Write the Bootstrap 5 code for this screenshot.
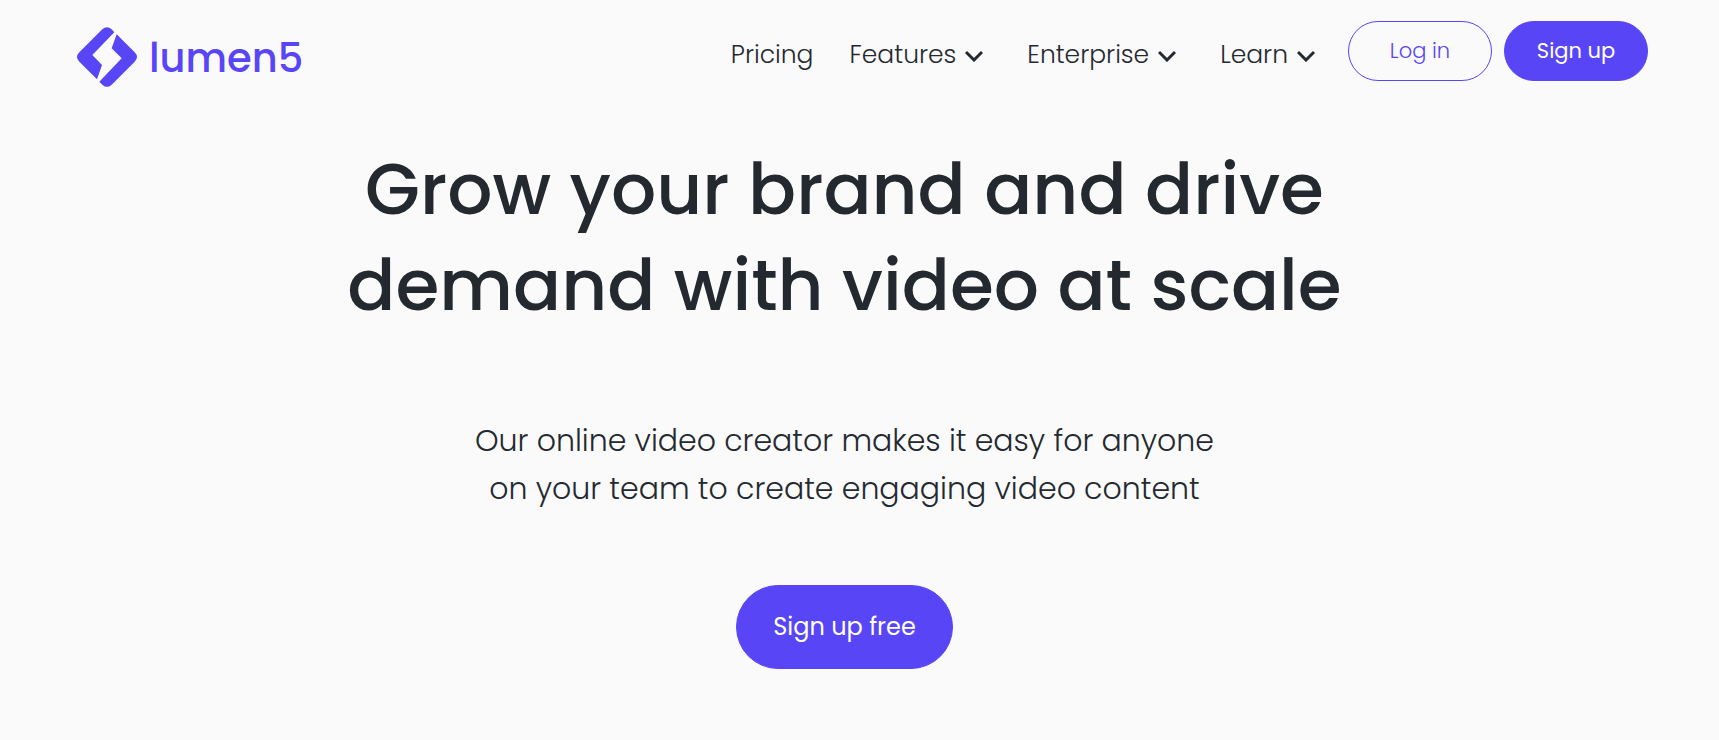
<!DOCTYPE html>
<html lang="en">
<head>
<meta charset="utf-8">
<meta name="viewport" content="width=device-width, initial-scale=1">
<title>Lumen5</title>
<link href="https://cdn.jsdelivr.net/npm/bootstrap@5.3.0/dist/css/bootstrap.min.css" rel="stylesheet">
<style>
  :root { --brand: #5846f6; --ink: #242930; }
  body { background: #fafafa; color: var(--ink); font-family: Poppins, Inter, sans-serif; }
  .site-header { padding: 21px 71px 0 77px; }
  .site-logo { color: var(--brand); font-size: 40px; line-height: 60px; font-weight: 500; gap: 12px; padding-top: 5px; }
  .site-logo:hover { color: var(--brand); }
  .site-logo span { padding-top: 2px; }
  .site-menu { gap: 36px; padding: 16px 25px 0 0; }
  .site-menu .nav-link { color: var(--ink); font-size: 25px; line-height: 36px; font-weight: 300; padding: 0; }
  .chevron { margin: 2px 8px 0 9px; }
  .site-actions { gap: 12px; }
  .pill { border-radius: 50rem; --bs-btn-color: var(--brand); --bs-btn-border-color: var(--brand); --bs-btn-hover-color: #fff; --bs-btn-hover-bg: var(--brand); --bs-btn-hover-border-color: var(--brand); }
  .pill-solid { --bs-btn-color: #fff; --bs-btn-bg: var(--brand); }
  .pill-header { width: 144px; height: 60px; font-size: 21px; padding: 0; }
  .pill-hero { width: 217px; height: 84px; font-size: 24px; padding: 0; }
  .hero { padding: 53px 30px 71px 0; }
  .hero-title { font-size: 71px; line-height: 96px; font-weight: 500; margin-bottom: 84px; }
  .hero-text { font-size: 30px; line-height: 48px; font-weight: 300; margin-bottom: 72px; }
</style>
</head>
<body>
<header class="site-header d-flex align-items-start justify-content-between">
  <a class="site-logo d-flex align-items-center text-decoration-none" href="#">
    <svg width="60" height="60" viewBox="0 0 180 180" fill="currentColor" aria-hidden="true">
      <path d="M112 16 46 84 75 114 60 157 7 104Q-7 90 7 76L76 7Q90-6 104 7Z"/>
      <path d="M119 22 173 76Q187 90 173 104L104 173Q90 186 76 173L67 164 134 94 104 64Z"/>
    </svg>
    <span>lumen5</span>
  </a>
  <div class="d-flex align-items-start">
    <nav aria-label="Main">
      <ul class="site-menu nav flex-nowrap">
        <li class="nav-item"><a class="nav-link" href="#">Pricing</a></li>
        <li class="nav-item"><a class="nav-link d-flex align-items-center" href="#">Features<svg class="chevron" width="18" height="12" viewBox="0 0 18 12" fill="none" stroke="currentColor" stroke-width="3" aria-hidden="true"><path d="M1 2l8 8 8-8"/></svg></a></li>
        <li class="nav-item"><a class="nav-link d-flex align-items-center" href="#">Enterprise<svg class="chevron" width="18" height="12" viewBox="0 0 18 12" fill="none" stroke="currentColor" stroke-width="3" aria-hidden="true"><path d="M1 2l8 8 8-8"/></svg></a></li>
        <li class="nav-item"><a class="nav-link d-flex align-items-center" href="#">Learn<svg class="chevron" width="18" height="12" viewBox="0 0 18 12" fill="none" stroke="currentColor" stroke-width="3" aria-hidden="true"><path d="M1 2l8 8 8-8"/></svg></a></li>
      </ul>
    </nav>
    <div class="site-actions d-flex">
      <button type="button" class="btn pill pill-header fw-light">Log in</button>
      <button type="button" class="btn pill pill-solid pill-header">Sign up</button>
    </div>
  </div>
</header>
<main class="hero text-center">
  <h1 class="hero-title">Grow your brand and drive<br>demand with video at scale</h1>
  <p class="hero-text">Our online video creator makes it easy for anyone<br>on your team to create engaging video content</p>
  <button type="button" class="btn pill pill-solid pill-hero">Sign up free</button>
</main>
<script src="https://cdn.jsdelivr.net/npm/bootstrap@5.3.0/dist/js/bootstrap.bundle.min.js"></script>
</body>
</html>
